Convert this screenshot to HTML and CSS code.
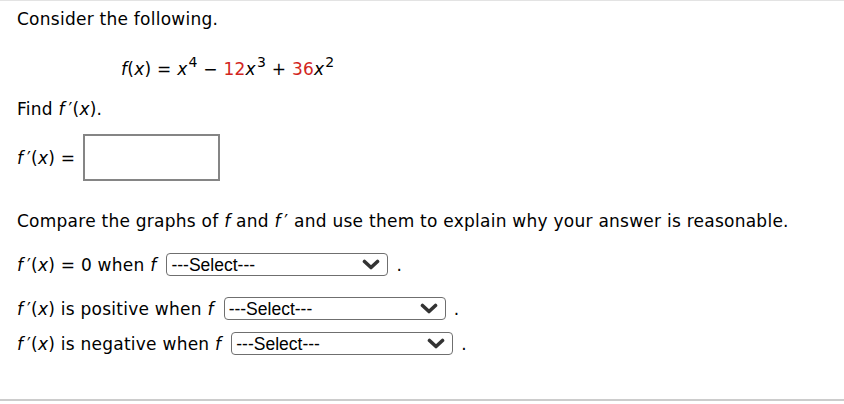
FILE: index.html
```html
<!DOCTYPE html>
<html>
<head>
<meta charset="utf-8">
<link rel="stylesheet" href="styles.css">
</head>
<body>
<div class="question">
  <p class="line intro">Consider the following.</p>
  <p class="line equation"><i>f</i>(<i>x</i>) = <i>x</i><sup>4</sup> &minus; <span class="red">12</span><i>x</i><sup>3</sup> + <span class="red">36</span><i>x</i><sup>2</sup></p>
  <p class="line find">Find <i>f</i>&thinsp;&prime;(<i>x</i>).</p>
  <div class="line answer"><span><i>f</i>&thinsp;&prime;(<i>x</i>) =</span><span class="box"></span></div>
  <p class="line compare">Compare the graphs of <i>f</i> and <i>f</i>&thinsp;&prime; and use them to explain why your answer is reasonable.</p>
  <div class="line row row1"><span><i>f</i>&thinsp;&prime;(<i>x</i>) = 0 when <i>f</i></span><span class="select"><span class="sel-text">---Select---</span><svg class="chev" viewBox="0 0 18 11" width="18" height="11"><path d="M2.5 2.5 L9 8.5 L15.5 2.5" fill="none" stroke="#333" stroke-width="3.6" stroke-linecap="round" stroke-linejoin="round"/></svg></span><span class="dot">.</span></div>
  <div class="line row row2"><span><i>f</i>&thinsp;&prime;(<i>x</i>) is positive when <i>f</i></span><span class="select"><span class="sel-text">---Select---</span><svg class="chev" viewBox="0 0 18 11" width="18" height="11"><path d="M2.5 2.5 L9 8.5 L15.5 2.5" fill="none" stroke="#333" stroke-width="3.6" stroke-linecap="round" stroke-linejoin="round"/></svg></span><span class="dot">.</span></div>
  <div class="line row row3"><span><i>f</i>&thinsp;&prime;(<i>x</i>) is negative when <i>f</i></span><span class="select"><span class="sel-text">---Select---</span><svg class="chev" viewBox="0 0 18 11" width="18" height="11"><path d="M2.5 2.5 L9 8.5 L15.5 2.5" fill="none" stroke="#333" stroke-width="3.6" stroke-linecap="round" stroke-linejoin="round"/></svg></span><span class="dot">.</span></div>
</div>
</body>
</html>
```
FILE: styles.css
```css
html, body {
  margin: 0;
  padding: 0;
  background: #fff;
}
body {
  font-family: "DejaVu Sans", Verdana, sans-serif;
  font-size: 17px;
  letter-spacing: 0.25px;
  color: #000;
}
.question {
  border-top: 1px solid #e3e3e3;
  border-bottom: 2px solid #cccccc;
  padding-left: 17px;
  box-sizing: border-box;
  height: 401px;
}
.line {
  margin: 0;
  line-height: 20px;
}
.intro {
  padding-top: 8px;
}
.equation {
  margin-top: 30px;
  padding-left: 104px;
}
.equation sup {
  font-size: 14px;
  line-height: 0;
  vertical-align: 8px;
  margin-left: 1px;
}
.red {
  color: #d2261e;
}
.find {
  margin-top: 20px;
}
.answer {
  margin-top: 15px;
  display: flex;
  align-items: center;
  gap: 8px;
}
.box {
  display: block;
  width: 137px;
  height: 47px;
  box-sizing: border-box;
  border: 2px solid #858585;
}
.compare {
  margin-top: 30px;
}
.row {
  display: flex;
  align-items: center;
}
.row1 {
  margin-top: 22px;
}
.row2 {
  margin-top: 21px;
}
.row3 {
  margin-top: 12px;
}
.select {
  margin-left: 10px;
  width: 222px;
  height: 23px;
  box-sizing: border-box;
  border: 1px solid #6f6f6f;
  border-radius: 4px;
  display: flex;
  align-items: center;
  justify-content: space-between;
  padding: 0 7px 0 4px;
  font-family: "Liberation Sans", Arial, sans-serif;
  font-size: 17.5px;
  letter-spacing: 0;
  color: #000;
}
.chev {
  display: block;
}
.dot {
  margin-left: 8px;
}
```
